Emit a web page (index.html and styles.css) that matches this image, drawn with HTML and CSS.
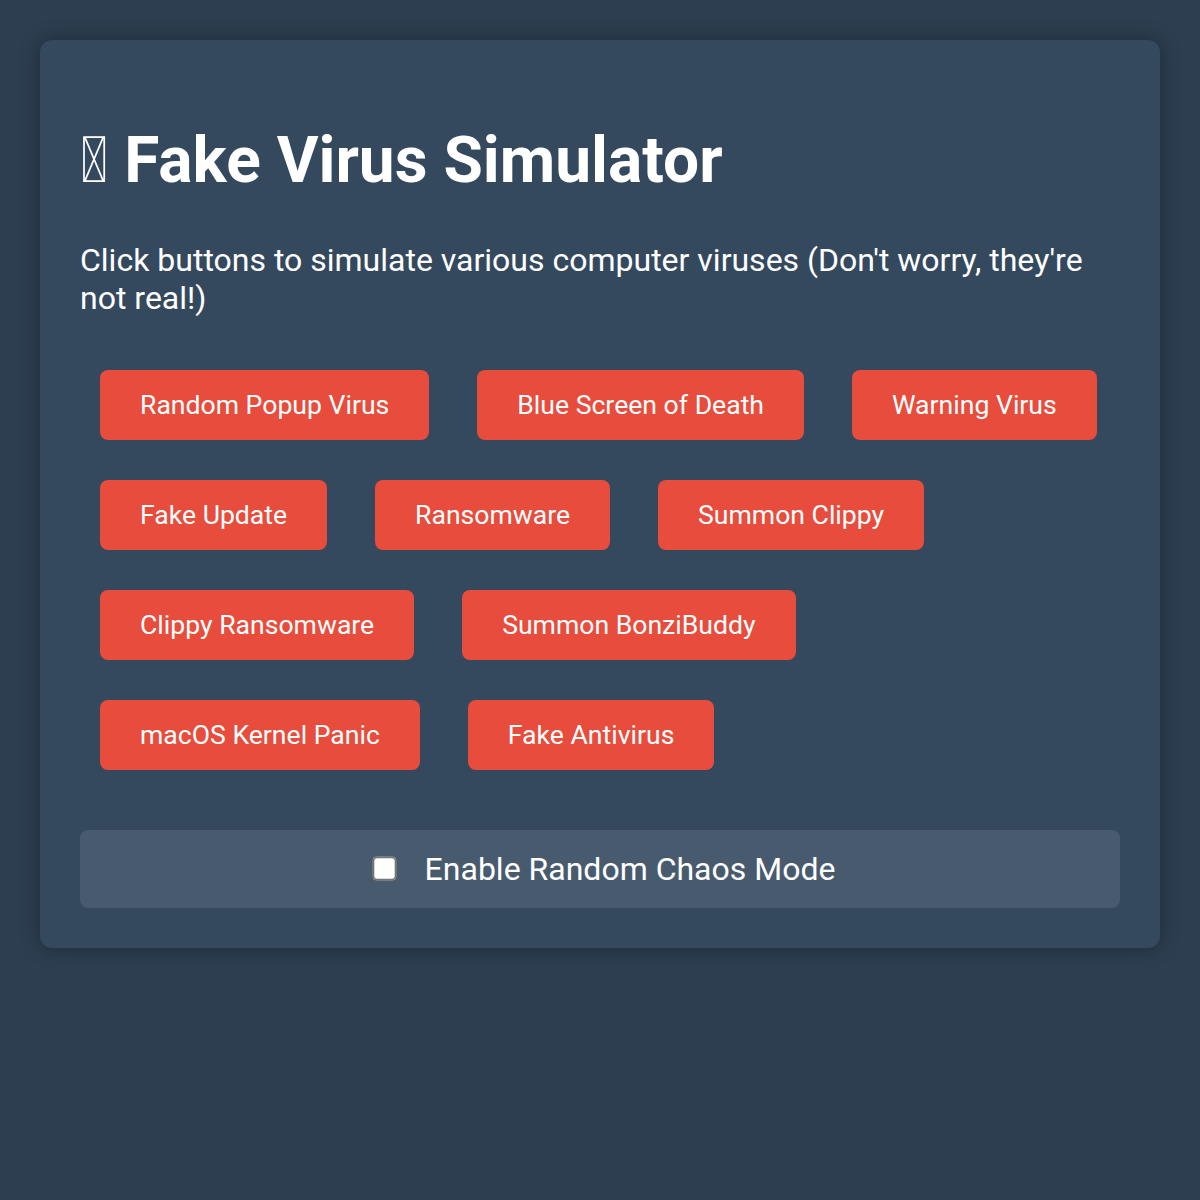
FILE: index.html
```html
<!DOCTYPE html>
<html>
<head>
    <title>Fake Virus Simulator</title>
    <link rel="stylesheet" href="styles.css">
</head>
<body>
    <div class="container">
        <h1>&#xE000; Fake Virus Simulator</h1>
        <p>Click buttons to simulate various computer viruses (Don't worry, they're not real!)</p>

        <div class="buttons">
            <button class="virus-btn">Random Popup Virus</button>
            <button class="virus-btn">Blue Screen of Death</button>
            <button class="virus-btn">Warning Virus</button>
            <button class="virus-btn">Fake Update</button>
            <button class="virus-btn">Ransomware</button>
            <button class="virus-btn">Summon Clippy</button>
            <button class="virus-btn">Clippy Ransomware</button>
            <button class="virus-btn">Summon BonziBuddy</button>
            <button class="virus-btn">macOS Kernel Panic</button>
            <button class="virus-btn">Fake Antivirus</button>
        </div>

        <label class="chaos">
            <input type="checkbox" id="chaos-mode">
            Enable Random Chaos Mode
        </label>
    </div>
</body>
</html>
```

FILE: styles.css
```css
body {
    margin: 0;
    padding: 40px;
    background-color: #2c3e50;
    color: white;
    font-family: Roboto, "Noto Sans", sans-serif;
    font-size: 32px;
}

.container {
    background-color: #34495e;
    border-radius: 12px;
    padding: 40px;
    box-shadow: 0 0 20px rgba(0, 0, 0, 0.3);
}

h1 {
    font-size: 64px;
}

.buttons {
    padding-top: 1px;
}

.virus-btn {
    background-color: #e74c3c;
    color: white;
    border: none;
    border-radius: 8px;
    padding: 20px 40px;
    margin: 20px;
    font-family: Roboto, "Noto Sans", sans-serif;
    font-size: 26.6px;
    line-height: 30px;
    cursor: pointer;
}

.chaos {
    display: flex;
    justify-content: center;
    align-items: center;
    gap: 33.5px;
    margin-top: 40px;
    padding: 20px;
    background-color: rgba(255, 255, 255, 0.1);
    border-radius: 8px;
    line-height: 38px;
}

/* native checkbox, just blown up */
.chaos input {
    margin: 0 0 0 13.5px;
    transform: scale(1.85);
}
```
